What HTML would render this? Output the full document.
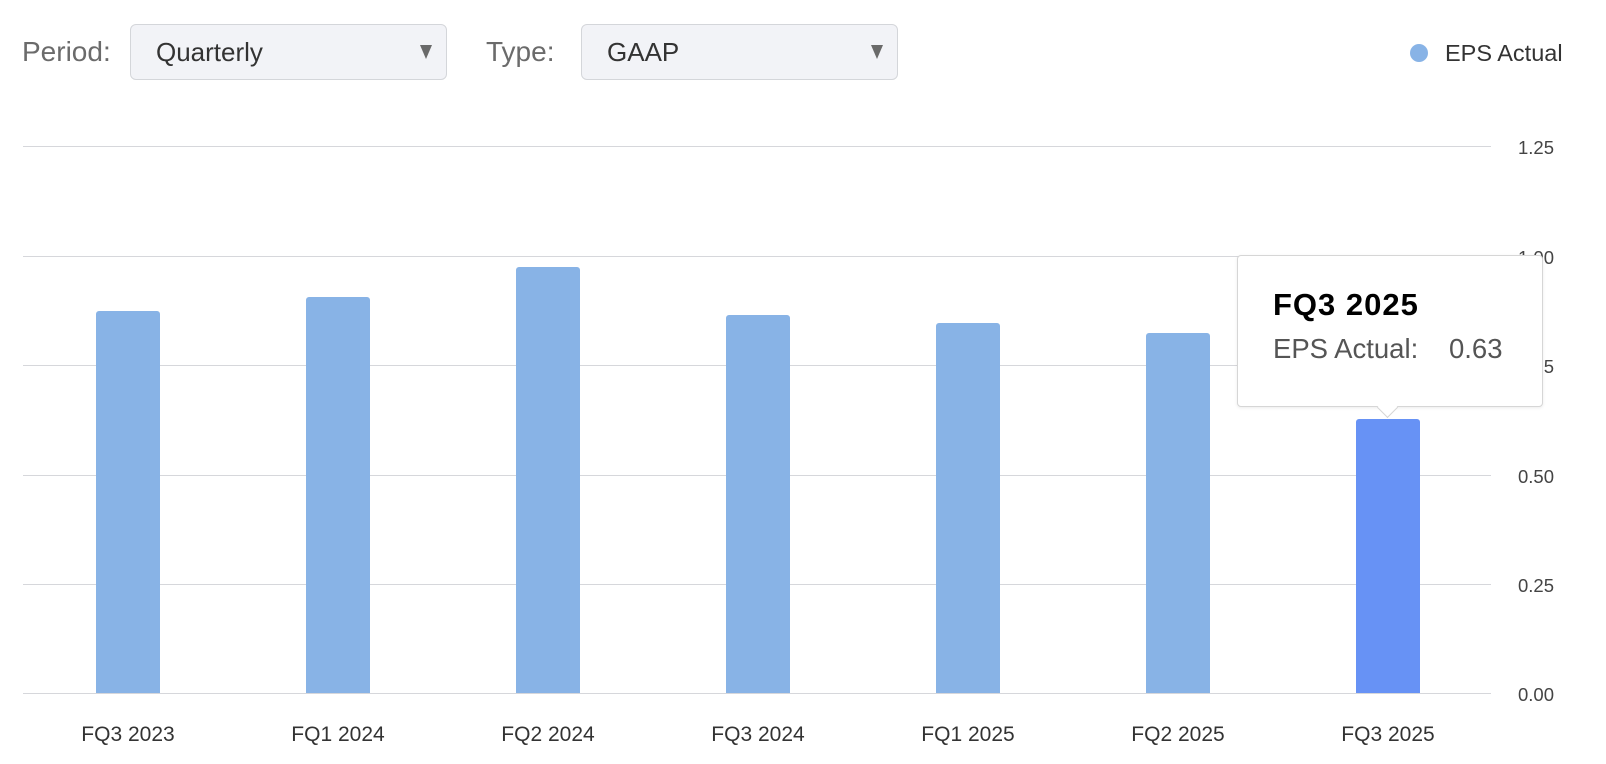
<!DOCTYPE html>
<html><head><style>
body{margin:0;width:1606px;height:764px;background:#fff;font-family:"Liberation Sans",sans-serif;position:relative;overflow:hidden}
.a{position:absolute}
.sel{position:absolute;top:24px;height:56px;width:317px;background:#f2f3f7;border:1px solid #d4d6da;border-radius:6px;box-sizing:border-box;font-size:26px;color:#333;line-height:54px;padding-left:25px}
.sel:after{content:"";position:absolute;right:14px;top:20px;border-left:6px solid transparent;border-right:6px solid transparent;border-top:14px solid #6a6a6a}
.lbl{position:absolute;top:24px;line-height:56px;font-size:28px;color:#6b6b6b}
.g{position:absolute;left:23px;width:1468px;height:1px;background:#d6d7db}
.y{position:absolute;left:1506px;font-size:18.5px;color:#444;width:60px;text-align:center}
.b{position:absolute;width:64px;background:#88b3e6;border-radius:3px 3px 0 0}
.x{position:absolute;top:723px;width:180px;text-align:center;font-size:21px;color:#333}
</style></head><body>
<div class="lbl" style="left:22px">Period:</div>
<div class="sel" style="left:130px">Quarterly</div>
<div class="lbl" style="left:486px">Type:</div>
<div class="sel" style="left:581px">GAAP</div>
<div class="a" style="left:1410px;top:44px;width:18px;height:18px;border-radius:50%;background:#88b3e6"></div>
<div class="a" style="left:1445px;top:40px;font-size:23.5px;color:#333">EPS Actual</div>

<div class="g" style="top:146px"></div>
<div class="g" style="top:256px"></div>
<div class="g" style="top:365px"></div>
<div class="g" style="top:475px"></div>
<div class="g" style="top:584px"></div>
<div class="g" style="top:693px"></div>
<div class="y" style="top:137px">1.25</div>
<div class="y" style="top:247px">1.00</div>
<div class="y" style="top:356px">0.75</div>
<div class="y" style="top:466px">0.50</div>
<div class="y" style="top:575px">0.25</div>
<div class="y" style="top:684px">0.00</div>

<div class="b" style="left:96px;top:311px;height:382px"></div>
<div class="b" style="left:306px;top:297px;height:396px"></div>
<div class="b" style="left:516px;top:267px;height:426px"></div>
<div class="b" style="left:726px;top:315px;height:378px"></div>
<div class="b" style="left:936px;top:323px;height:370px"></div>
<div class="b" style="left:1146px;top:333px;height:360px"></div>
<div class="b" style="left:1356px;top:419px;height:274px;background:#6792f5"></div>

<div class="x" style="left:38px">FQ3 2023</div>
<div class="x" style="left:248px">FQ1 2024</div>
<div class="x" style="left:458px">FQ2 2024</div>
<div class="x" style="left:668px">FQ3 2024</div>
<div class="x" style="left:878px">FQ1 2025</div>
<div class="x" style="left:1088px">FQ2 2025</div>
<div class="x" style="left:1298px">FQ3 2025</div>

<div class="a" style="left:1237px;top:255px;width:306px;height:152px;background:#fff;border:1px solid #d6d6d6;border-radius:4px;box-sizing:border-box;box-shadow:0 1px 3px rgba(0,0,0,.08)">
<div class="a" style="left:35px;top:31px;font-size:31px;letter-spacing:1px;font-weight:bold;color:#000">FQ3 2025</div>
<div class="a" style="left:35px;top:77px;font-size:27.5px;color:#555">EPS Actual:</div>
<div class="a" style="left:211px;top:77px;font-size:27.5px;color:#555">0.63</div>
</div>
<div class="a" style="left:1380px;top:400px;width:14px;height:14px;background:#fff;border-right:1px solid #d6d6d6;border-bottom:1px solid #d6d6d6;transform:rotate(45deg)"></div>
</body></html>
